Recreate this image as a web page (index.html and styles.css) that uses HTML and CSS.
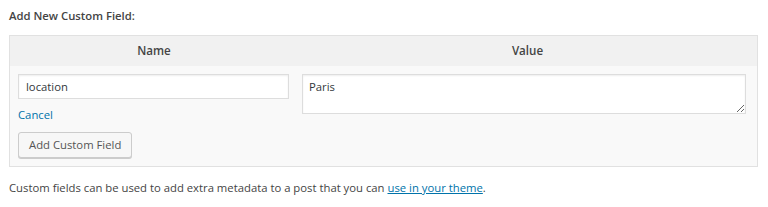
FILE: index.html
```html
<!DOCTYPE html>
<html lang="en">
<head>
    <meta charset="UTF-8">
    <meta name="viewport" content="width=device-width, initial-scale=1.0">
    <title>Custom Fields</title>
    <link rel="stylesheet" href="styles.css">
</head>
<body>
    <div class="postcustom">
        <p class="meta-label">Add New Custom Field:</p>

        <!-- New meta table -->
        <div class="newmeta">
            <div class="newmeta-head">
                <div class="col-name">Name</div>
                <div class="col-value">Value</div>
            </div>
            <div class="newmeta-body">
                <div class="col-name">
                    <input type="text" class="meta-key" value="location">
                    <a href="#" class="cancel-link">Cancel</a>
                    <button type="button" class="button">Add Custom Field</button>
                </div>
                <div class="col-value">
                    <textarea class="meta-value">Paris</textarea>
                </div>
            </div>
        </div>

        <p class="meta-note">Custom fields can be used to add extra metadata to a post that you can <a href="#">use in your theme</a>.</p>
    </div>
</body>
</html>
```

FILE: styles.css
```css
* {
    margin: 0;
    padding: 0;
    box-sizing: border-box;
}

body {
    font-family: "Open Sans", "Noto Sans", sans-serif;
    font-size: 11.3px;
    color: #444;
    background: #fff;
}

.postcustom {
    padding: 7px 10px 0 9px;
}

.meta-label {
    font-weight: 600;
    line-height: 18px;
    margin-bottom: 10px;
}

.newmeta {
    border: 1px solid #e1e1e1;
    background: #f9f9f9;
}

.newmeta-head,
.newmeta-body {
    display: grid;
    grid-template-columns: 288px 1fr;
}

.newmeta-head {
    background: #f1f1f1;
    font-weight: 600;
    font-size: 11.6px;
    text-align: center;
    height: 30px;
    line-height: 30px;
}

.newmeta-body {
    padding: 8px 0 8px;
}

.newmeta-body .col-name {
    display: flex;
    flex-direction: column;
    align-items: flex-start;
    padding: 0 9px 0 8px;
}

.newmeta-body .col-value {
    padding: 0 11px 0 4px;
}

input,
textarea,
button {
    font-family: inherit;
    font-size: 11.3px;
    color: #32373c;
}

.meta-key {
    width: 100%;
    height: 25px;
    padding: 0 7px;
    border: 1px solid #ddd;
    box-shadow: inset 0 1px 2px rgba(0, 0, 0, 0.07);
    background: #fff;
}

.meta-value {
    display: block;
    width: 100%;
    height: 40px;
    padding: 3px 6px;
    border: 1px solid #ddd;
    box-shadow: inset 0 1px 2px rgba(0, 0, 0, 0.07);
    background: #fff;
    line-height: 18px;
    resize: vertical;
}

input:focus,
textarea:focus {
    outline: none;
}

.cancel-link {
    color: #0073aa;
    text-decoration: none;
    line-height: 18px;
    margin: 7px 0 8px;
}

.button {
    height: 26px;
    padding: 0 10px 1px;
    color: #555;
    background: #f7f7f7;
    border: 1px solid #ccc;
    border-radius: 3px;
    box-shadow: 0 1px 0 #ccc;
    cursor: pointer;
}

.meta-note {
    line-height: 18px;
    margin-top: 12px;
}

.meta-note a {
    color: #0073aa;
}
```
